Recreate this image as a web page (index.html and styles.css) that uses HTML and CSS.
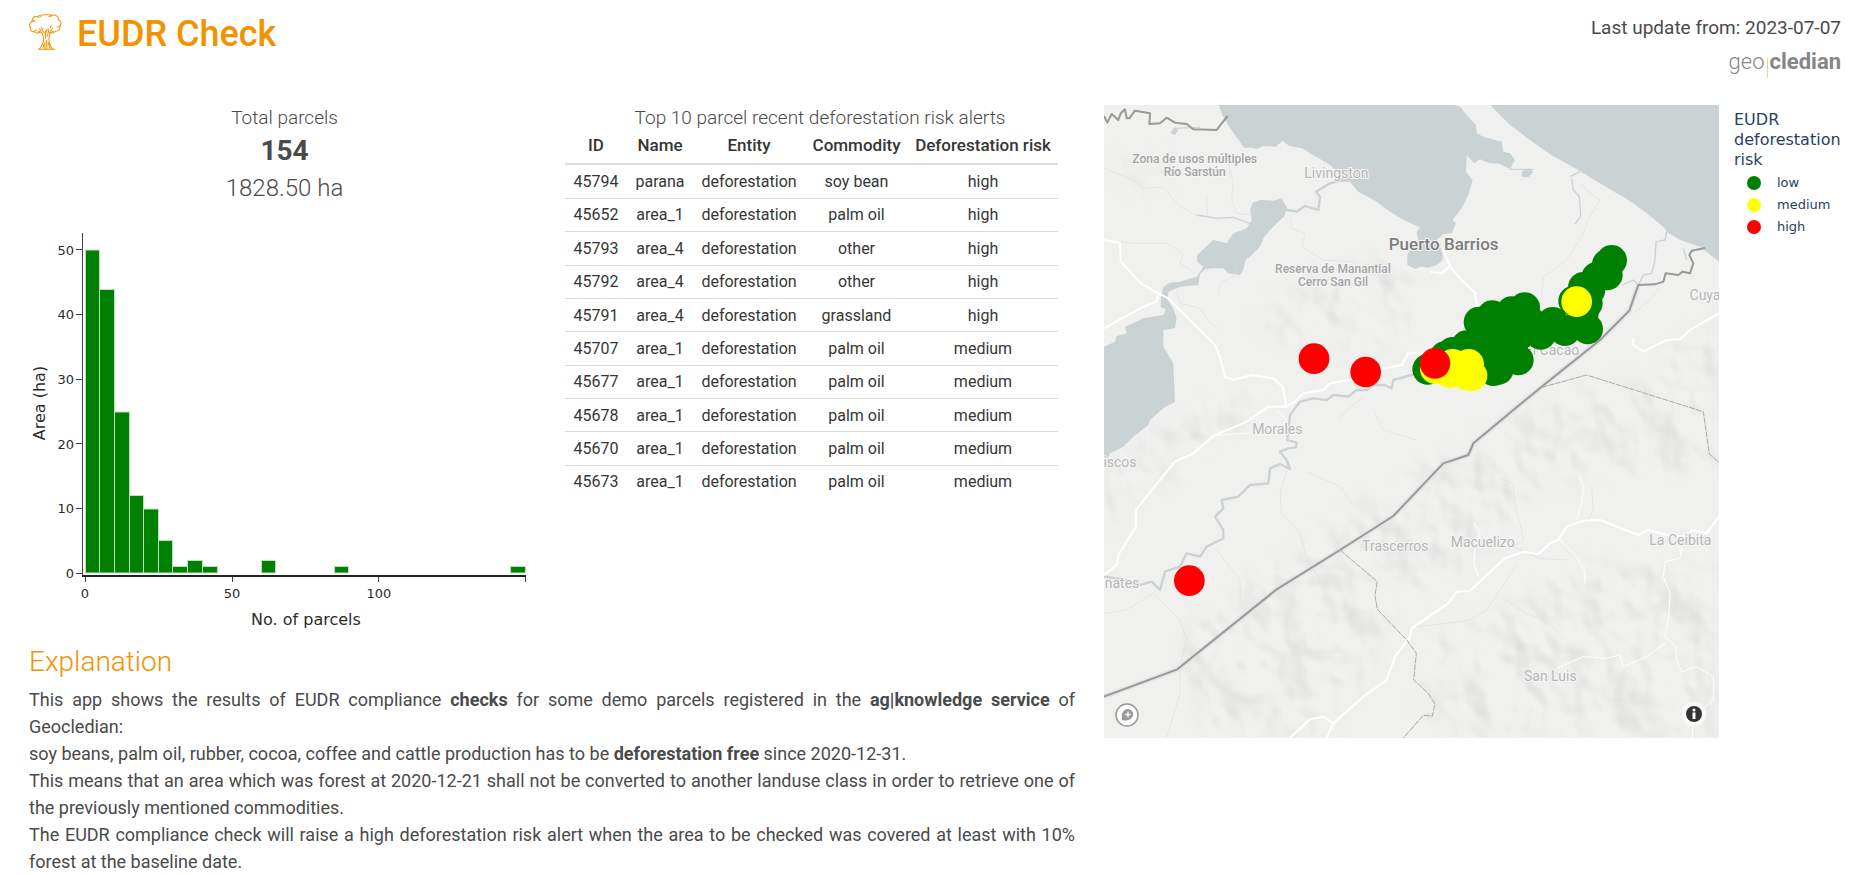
FILE: index.html
```html
<!DOCTYPE html>
<html lang="en">
<head>
<meta charset="utf-8">
<meta name="viewport" content="width=device-width, initial-scale=1">
<title>EUDR Check</title>
<link rel="stylesheet" href="styles.css">
</head>
<body>
<header class="header">
  <div class="brand">
    <svg class="brand-icon" viewBox="0 0 32 35" aria-hidden="true">
      <path d="M11 17.500C9 19 6 18.500 5 17C3 18 1 16 1.500 13C-.5 11 .5 8 3 7.500C2.500 4 5 2 8 2.500C11 .5 20 .2 23 1.200C26 .2 29 3 28.500 5.500C31 6.500 32 9.500 30 11.500C31 14 29 17 26 16.500C24 19 21 19 19.500 17.500M5 17C6 15.500 7 15.500 8 16M3 7.500C4 6.500 5 6.500 6 7M23 1.200C22 2 21 2.500 19 2.500M30 11.500C29.500 12.500 28 13 27 12.500M8 2.500C10 4 11 2.500 12 2.500"/>
      <path d="M9 16.500L12.500 18.500L14 22V27L11 33L9.500 34.300H24L22 33L19.500 28V22L20.500 18.500L24 16.500M15.500 34V27M17.500 34L17 25M13.500 33.500L14.500 29M20.500 33.500L18.500 28M16 24V16M17.500 22L19 17L18.500 14M15 19L13 16L13.500 14M11.500 12.500L12.500 14.500M21.500 11L20.500 14M16.500 18L17.500 14.500M10 14L12 17M23 14L20.500 17"/>
    </svg>
    <h1 class="brand-title">EUDR Check</h1>
  </div>
  <div class="meta">
    <p class="updated">Last update from: 2023-07-07</p>
    <p class="logo"><span class="logo-geo">geo</span><span class="logo-bar"></span><span class="logo-cledian">cledian</span></p>
  </div>
</header>

<main class="dashboard">
  <div class="left">
    <section class="summary">
      <p class="caption">Total parcels</p>
      <p class="count">154</p>
      <p class="area">1828.50 ha</p>
      <svg class="chart" viewBox="29 220 511 414" role="img" aria-label="Histogram of parcel area">
        <g class="bars">
          <rect x="85.500" y="250" width="14" height="323"/><rect x="99.500" y="289.500" width="15" height="283.500"/>
          <rect x="114.500" y="412" width="15" height="161"/><rect x="129.500" y="495.500" width="14" height="77.500"/>
          <rect x="143.500" y="509" width="15" height="64"/><rect x="158.500" y="540.500" width="14" height="32.500"/>
          <rect x="172.500" y="566.500" width="15" height="6.500"/><rect x="187.500" y="560.500" width="15" height="12.500"/>
          <rect x="202.500" y="566.500" width="15" height="6.500"/><rect x="261.500" y="560.500" width="14" height="12.500"/>
          <rect x="334.500" y="566.500" width="14" height="6.500"/><rect x="510.500" y="566.500" width="15" height="6.500"/>
        </g>
        <path class="axis" d="M82.500 233V576M76 249.500H82M76 314.500H82M76 379.500H82M76 443.500H82M76 508.500H82M76 573.500H82M85.500 576V582M232.500 576V582M378.500 576V582M525.500 576V582"/>
        <path class="axis-x" d="M82 576H526"/>
        <g class="tick tick-y">
          <text x="74" y="255">50</text><text x="74" y="319">40</text><text x="74" y="384">30</text>
          <text x="74" y="449">20</text><text x="74" y="513">10</text><text x="74" y="578">0</text>
        </g>
        <g class="tick tick-x">
          <text x="85" y="598">0</text><text x="232" y="598">50</text><text x="379" y="598">100</text>
        </g>
        <text class="axis-title" x="306" y="625">No. of parcels</text>
        <text class="axis-title" transform="translate(45 403) rotate(-90)">Area (ha)</text>
      </svg>
    </section>

    <section class="alerts">
      <p class="caption">Top 10 parcel recent deforestation risk alerts</p>
      <div class="table-wrap">
      <table class="table">
        <colgroup><col class="c-id"><col class="c-name"><col class="c-entity"><col class="c-commodity"><col class="c-risk"></colgroup>
        <thead><tr><th>ID</th><th>Name</th><th>Entity</th><th>Commodity</th><th>Deforestation risk</th></tr></thead>
        <tbody>
          <tr><td>45794</td><td>parana</td><td>deforestation</td><td>soy bean</td><td>high</td></tr>
          <tr><td>45652</td><td>area_1</td><td>deforestation</td><td>palm oil</td><td>high</td></tr>
          <tr><td>45793</td><td>area_4</td><td>deforestation</td><td>other</td><td>high</td></tr>
          <tr><td>45792</td><td>area_4</td><td>deforestation</td><td>other</td><td>high</td></tr>
          <tr><td>45791</td><td>area_4</td><td>deforestation</td><td>grassland</td><td>high</td></tr>
          <tr><td>45707</td><td>area_1</td><td>deforestation</td><td>palm oil</td><td>medium</td></tr>
          <tr><td>45677</td><td>area_1</td><td>deforestation</td><td>palm oil</td><td>medium</td></tr>
          <tr><td>45678</td><td>area_1</td><td>deforestation</td><td>palm oil</td><td>medium</td></tr>
          <tr><td>45670</td><td>area_1</td><td>deforestation</td><td>palm oil</td><td>medium</td></tr>
          <tr><td>45673</td><td>area_1</td><td>deforestation</td><td>palm oil</td><td>medium</td></tr>
        </tbody>
      </table>
      </div>
    </section>

    <section class="explanation">
      <h2 class="heading">Explanation</h2>
      <p class="copy">This app shows the results of EUDR compliance <b>checks</b> for some demo parcels registered in the <b>ag|knowledge service</b> of Geocledian:<br>soy beans, palm oil, rubber, cocoa, coffee and cattle production has to be <b>deforestation free</b> since 2020-12-31.<br>This means that an area which was forest at 2020-12-21 shall not be converted to another landuse class in order to retrieve one of the previously mentioned commodities.<br>The EUDR compliance check will raise a high deforestation risk alert when the area to be checked was covered at least with 10% forest at the baseline date.</p>
    </section>
  </div>

  <section class="map-panel">
    <div class="map">
      <svg class="map-canvas" viewBox="12 15 1845 1899" role="img" aria-label="Map of parcels by deforestation risk">
        <defs>
          <filter id="relief" x="0" y="0" width="100%" height="100%" color-interpolation-filters="sRGB">
            <feTurbulence type="fractalNoise" baseFrequency="0.007 0.006" numOctaves="3" seed="8"/>
            <feDiffuseLighting surfaceScale="30" lighting-color="#fff"><feDistantLight azimuth="315" elevation="50"/></feDiffuseLighting>
            <feColorMatrix values="0 0 0 0 .3  0 0 0 0 .3  0 0 0 0 .3  -.18 0 0 0 .15"/>
          </filter>
          <filter id="soft" x="-30%" y="-30%" width="160%" height="160%"><feGaussianBlur stdDeviation="35"/></filter>
          <mask id="hills" maskUnits="userSpaceOnUse" x="12" y="15" width="1845" height="1899">
            <g fill="#fff" filter="url(#soft)">
              <path d="M480 620L780 470L960 540L930 720L640 740L440 680Z"/>
              <path d="M12 1090L400 870L500 900L200 1130L12 1300Z"/>
              <path d="M240 1600L640 1300L1150 1000L1480 860L1857 800V1100L1600 1110L1300 1160L1180 1340L900 1500L700 1914H300Z"/>
              <path d="M980 1600L1300 1500L1400 1380L1857 1400V1914H960Z"/>
              <path d="M12 180L150 130L250 260L100 300Z" opacity=".5"/>
              <path d="M1680 760L1857 640V950Z"/>
            </g>
          </mask>
        </defs>
        <rect class="land" x="12" y="15" width="1845" height="1899"/>
        <g mask="url(#hills)"><rect x="12" y="15" width="1845" height="1899" filter="url(#relief)"/></g>
        <g class="water">
          <path d="M356 15L368 48 383 72 400 98 420 125 432 143 455 143 470 147 490 138 528 140 547 122 568 138 605 145 640 165 690 195 722 225 700 245 750 245 775 275 830 305 870 335 915 362 960 382 950 395 955 420 935 440 922 465 922 495 945 507 960 500 985 503 1010 495 1028 480 1028 460 1020 440 1010 420 1030 403 1055 400 1068 370 1058 360 1085 325 1105 285 1118 240 1098 215 1100 165 1122 190 1140 178 1165 188 1200 192 1230 207 1245 180 1230 160 1210 155 1205 125 1150 110 1130 100 1128 75 1100 45 1080 20 1065 15Z"/>
          <path d="M1170 15L1230 75 1290 120 1350 163 1440 213 1500 250 1600 310 1640 340 1695 385 1700 395 1740 420 1800 440 1857 485V15Z"/>
          <path d="M455 360L450 330 458 308 480 300 520 302 545 295 562 325 552 350 530 370 510 390 490 415 480 440 455 465 437 480 430 510 420 525 385 520 370 505 340 505 315 508 300 522 295 555 240 560 205 575 203 600 218 622 230 655 225 685 190 690 190 740 205 765 220 790 225 905 190 925 150 960 145 975 100 1010 70 1040 30 1060 22 1078 12 1075V740L45 725 50 708 80 700 75 680 100 670 130 655 190 645 198 628 182 622 183 590 190 560 210 548 240 545 290 530 310 500 292 485 292 465 340 420 380 430 400 400 440 385Z"/>
          <path d="M1265 215L1285 205 1300 215 1285 232 1265 230ZM210 98L225 82 235 90 225 105Z"/>
        </g>
        <g class="river">
          <path d="M560 330L590 335 615 318 655 330 660 290 648 275 690 250 730 240M960 815L935 825 880 840 875 865 855 855 820 855 800 870 770 870 745 890 700 885 680 900 640 895 600 905 570 945 562 1020 590 1028 588 1042 565 1045 540 1055 560 1080 570 1107 540 1092 510 1105 505 1150 450 1155 415 1190 365 1200 370 1225 345 1250 370 1290 370 1315 320 1340 300 1370 260 1360 240 1400 195 1415 180 1470 155 1445 120 1455 80 1440 12 1430"/>
        </g>
        <path class="stream" d="M1228 208L1300 208M1410 230L1440 215M1415 235L1420 270 1438 290 1442 350 1425 372M1567 555L1600 540 1615 555 1630 525 1655 520 1665 480 1668 425 1695 420 1700 395M1750 445L1760 480M290 345L350 355 400 352 450 370M220 85L300 82"/>
        <path class="brook" d="M12 205L100 240 130 265 190 262 240 320 300 350M320 290L322 350M385 190L400 250 395 300 410 340 450 345M570 345L575 385 615 400 605 440 670 480 760 485M12 420L90 430 200 430 250 460 240 490 285 520M230 575L240 610 300 625 330 670 360 688M355 580L360 550 400 530 410 490M1440 250L1460 270 1500 300 1470 350 1445 410 1400 480 1360 510 1330 530 1325 585M1200 1135L1240 1150 1245 1220 1260 1270 1270 1320 1240 1340 1320 1375 1400 1380M560 1110L540 1180 545 1240 600 1300 620 1370 660 1440M620 1115L720 1160 760 1215M345 1345L420 1440 420 1520M160 1480L240 1560 260 1620 240 1700 240 1780 200 1914M12 1540L80 1530 160 1480M950 1580L1040 1570 1110 1560 1160 1530 1220 1440 1250 1390M1220 1500L1280 1540 1350 1570 1390 1620M1600 640L1650 600 1680 560M720 960L730 940 790 890M1475 1160L1480 1230 1460 1270M820 930L850 990 950 1020"/>
        <g class="road">
          <path d="M12 420L60 428 62 485 120 548 175 580 205 595 345 735 360 770 375 830 400 840 455 825 520 835 548 860 558 910 555 922M12 685L130 620 170 605 175 580M12 1425L50 1395 55 1365 108 1280 108 1230 155 1170 225 1085 280 1060 340 1008 440 965 505 920 560 920 585 905 610 880 670 870 690 850 750 840 840 808 905 795 925 760 980 758"/>
          <path d="M1028 445L1050 498 1075 530 1125 578 1132 630M1050 498L1025 520 990 515M1600 715L1600 735 1630 755 1700 720 1740 718 1770 690 1857 640"/>
          <path d="M1857 1250L1820 1300 1780 1290 1750 1310 1700 1305 1645 1290 1615 1305 1500 1260 1450 1262 1400 1280 1375 1320 1350 1330 1315 1363 1270 1355 1215 1375 1110 1472 1070 1475 1045 1510 1000 1540 935 1585 930 1610 885 1670 860 1740 790 1790 700 1870 680 1914M570 1914L630 1858 670 1850 700 1870"/>
        </g>
        <path class="lane" d="M1120 1268L1140 1295 1125 1340 1122 1390 1135 1430M1440 1130L1450 1160 1445 1210 1430 1260M1380 1320L1430 1370 1455 1415 1455 1450M1745 1340L1740 1375 1695 1385 1690 1430 1710 1480 1705 1560 1695 1610 1728 1640 1730 1680 1745 1715 1790 1700 1840 1730 1840 1800 1780 1850 1777 1914M1370 1705L1450 1670 1520 1675 1560 1665 1570 1700 1640 1670 1695 1630M340 1008L450 998M530 930L560 960"/>
        <path class="shade" d="M12 1790L232 1708 530 1468 720 1350 880 1248 1030 1090 1105 1065 1120 1030 1240 930 1325 860 1500 720 1588 632 1615 555"/>
        <path class="border" d="M12 48L22 68 35 42 55 60 62 40 75 28 80 55 88 55 105 32 150 40 148 72 180 70 200 53 225 68 260 72 280 88 350 90 365 70 383 48M12 1790L232 1708 530 1468 720 1350 880 1248 1030 1090 1105 1065 1120 1030 1240 930 1325 860 1500 720 1588 632 1615 555 1665 553 1690 545 1697 520 1735 525 1748 515 1770 520 1780 490 1768 465 1775 452 1815 444"/>
        <path class="province" d="M1325 862L1460 825 1810 935 1828 1062 1857 1087M720 1350L832 1445 825 1485 832 1528 920 1620 949 1660 941 1740 985 1780 1005 1812 997 1848 970 1846 910 1914"/>
        <g class="area-label">
          <text x="284" y="188">Zona de usos múltiples</text><text x="284" y="228">Río Sarstún</text>
          <text x="699" y="518">Reserva de Manantial</text><text x="699" y="558">Cerro San Gil</text>
        </g>
        <g class="place">
          <text x="709" y="234">Livingston</text><text x="532" y="1001">Morales</text><text x="886" y="1353">Trascerros</text>
          <text x="1148" y="1340">Macuelizo</text><text x="1741" y="1336">La Ceibita</text><text x="1351" y="1743">San Luis</text>
          <text x="1356" y="766">El Cacao</text><text x="1815" y="599">Cuya</text>
          <text x="60" y="1102">iscos</text><text x="66" y="1465">nates</text>
        </g>
        <text class="city" x="1031" y="451">Puerto Barrios</text>
        <g class="low">
          <circle cx="983" cy="808" r="46"/><circle cx="1137" cy="666" r="46"/><circle cx="1177" cy="647" r="46"/><circle cx="1235" cy="635" r="46"/><circle cx="1274" cy="623" r="46"/><circle cx="1290" cy="665" r="46"/><circle cx="1358" cy="667" r="46"/><circle cx="1322" cy="703" r="46"/><circle cx="1395" cy="692" r="46"/><circle cx="1440" cy="670" r="46"/><circle cx="1463" cy="687" r="46"/><circle cx="1462" cy="610" r="46"/><circle cx="1450" cy="562" r="46"/><circle cx="1421" cy="603" r="46"/><circle cx="1470" cy="570" r="46"/><circle cx="1490" cy="532" r="46"/><circle cx="1522" cy="525" r="46"/><circle cx="1535" cy="481" r="46"/><circle cx="1522" cy="493" r="46"/><circle cx="1255" cy="780" r="46"/><circle cx="1180" cy="812" r="46"/><circle cx="1195" cy="808" r="46"/><circle cx="1100" cy="737" r="46"/><circle cx="1058" cy="757" r="46"/><circle cx="1035" cy="770" r="46"/><circle cx="1210" cy="700" r="46"/><circle cx="1240" cy="730" r="46"/><circle cx="1160" cy="740" r="46"/><circle cx="1130" cy="780" r="46"/><circle cx="1220" cy="760" r="46"/><circle cx="1265" cy="700" r="46"/><circle cx="1450" cy="640" r="46"/>
        </g>
        <g class="medium">
          <circle cx="1430" cy="605" r="46"/><circle cx="1006" cy="806" r="46"/><circle cx="1058" cy="793" r="46"/><circle cx="1106" cy="793" r="46"/><circle cx="1050" cy="818" r="46"/><circle cx="1100" cy="825" r="46"/><circle cx="1116" cy="827" r="46"/>
        </g>
        <g class="high">
          <circle cx="1005" cy="790" r="46"/><circle cx="642" cy="776" r="46"/><circle cx="797" cy="816" r="46"/><circle cx="268" cy="1442" r="46"/>
        </g>
      </svg>
      <a class="map-logo" href="#" aria-label="Mapbox">
        <svg viewBox="0 0 24 24"><circle cx="12" cy="12" r="11" fill="#fff" stroke="#999" stroke-width="1.500"/><path fill="#999" d="M7 17.300C6.500 13 6.800 10 8.500 8.200A5.300 5.300 0 1 1 15.700 15.700C14 17.400 11 17.700 7 17.300Z"/><path fill="#fff" d="M13 8L14 10.400L16.400 11.500L14 12.500L13 15L12 12.500L9.600 11.500L12 10.400Z"/></svg>
      </a>
      <button class="map-info" type="button" aria-label="Attribution">
        <svg viewBox="0 0 24 24"><circle cx="12" cy="12" r="8" fill="#333"/><circle cx="12" cy="8" r="1.500" fill="#fff"/><path fill="#fff" d="M10.500 10.500H13.500V17H10.500Z"/></svg>
      </button>
    </div>
    <div class="legend">
      <p class="legend-title">EUDR deforestation risk</p>
      <ul class="legend-list">
        <li><span class="dot dot-low"></span>low</li>
        <li><span class="dot dot-medium"></span>medium</li>
        <li><span class="dot dot-high"></span>high</li>
      </ul>
    </div>
  </section>
</main>
</body>
</html>
```

FILE: styles.css
```css
* { box-sizing: border-box; }
body { margin: 0; padding: 12px 28px 12px 29px; background: #fff; color: #4a4a4a; font-family: Roboto, "Liberation Sans", sans-serif; font-size: 18px; }
p, h1, h2, ul { margin: 0; padding: 0; }

.header { display: flex; justify-content: space-between; min-height: 93px; }
.brand { display: flex; align-items: flex-start; gap: 15px; }
.brand-icon { width: 33px; height: 36px; margin-top: 2px; fill: none; stroke: #f39200; stroke-width: 1; }
.brand-title { color: #f39200; font-size: 36px; font-weight: 500; line-height: 44px; }
.meta { text-align: right; padding-right: 3px; }
.updated { font-size: 19px; line-height: 32px; }
.logo { display: flex; justify-content: flex-end; color: #868686; font-size: 22px; line-height: 36px; }
.logo-geo { font-weight: 300; }
.logo-bar { width: 1px; height: 20px; margin: 14px 2px 0; background: #fbcf8f; }
.logo-cledian { font-weight: 700; }

.dashboard { display: grid; grid-template-columns: 1046fr 740fr; gap: 29px; align-items: start; }
.left { display: grid; grid-template-columns: 511fr 527fr; column-gap: 8px; }
.caption { font-size: 19px; font-weight: 300; line-height: 25px; text-align: center; }
.summary { text-align: center; }
.count { font-size: 28px; font-weight: 700; line-height: 42px; }
.area { font-size: 24px; font-weight: 300; line-height: 32px; }
.chart { display: block; width: 100%; margin-top: 16px; }
.bars { fill: #008000; stroke: #bfe0bf; stroke-width: 1; }
.axis { fill: none; stroke: #444; stroke-width: 1; }
.axis-x { stroke: #222; stroke-width: 2; }
.tick, .axis-title { font-family: Verdana, "DejaVu Sans", sans-serif; fill: #2b2b2b; }
.tick { font-size: 13px; }
.tick-y { text-anchor: end; }
.tick-x, .axis-title { text-anchor: middle; }
.axis-title { font-size: 16px; }

.alerts { padding-left: 17px; }
.table-wrap { padding-right: 17px; }
.table { width: 100%; height: 368px; border-collapse: collapse; table-layout: fixed; color: #363636; font-size: 16px; text-align: center; }
.c-id { width: 62px; }
.c-name { width: 66px; }
.c-entity { width: 112px; }
.c-commodity { width: 103px; }
.table th { padding: 0 0 4px; height: 34px; font-size: 17px; font-weight: 500; line-height: 20px; vertical-align: middle; white-space: nowrap; border-bottom: 2px solid #dbdbdb; }
.table td { padding: 0; border-bottom: 1px solid #dbdbdb; }
.table tbody tr:last-child td { border-bottom: 0; }

.explanation { grid-column: 1 / -1; }
.heading { color: #f39200; font-size: 28px; font-weight: 300; line-height: 36px; margin-top: 10px; }
.copy { margin-top: 6px; line-height: 27px; text-align: justify; }

.map-panel { display: flex; align-items: flex-start; gap: 15px; }
.map { position: relative; flex: 1; }
.map-canvas { display: block; width: 100%; }
.land { fill: #f0f0ef; }
.water { fill: #cad2d3; }
.river, .stream, .brook, .road, .lane, .shade, .border, .province { fill: none; stroke-linejoin: round; }
.river { stroke: #cad2d3; stroke-width: 7; }
.stream { stroke: #cad2d3; stroke-width: 4; }
.brook { stroke: #dcdfdf; stroke-width: 2; }
.road { stroke: #fff; stroke-width: 6; }
.lane { stroke: #fff; stroke-width: 3; }
.shade { stroke: #e4e4e4; stroke-width: 15; }
.border { stroke: #999; stroke-width: 6; }
.province { stroke: #aaa; stroke-width: 3; stroke-dasharray: 18 3; }
.area-label, .place, .city { text-anchor: middle; paint-order: stroke; stroke: #f5f5f5; stroke-width: 6; }
.area-label { fill: #a3a3a3; font-size: 36px; font-weight: 500; }
.place { fill: #b5b5b5; font-size: 42px; }
.city { fill: #7d7d7d; font-size: 51px; font-weight: 500; }
.low { fill: #008000; }
.medium { fill: #ff0; }
.high { fill: #f00; }
.map-logo, .map-info { position: absolute; width: 24px; height: 24px; }
.map-logo { left: 11px; bottom: 11px; }
.map-info { right: 13px; bottom: 12px; padding: 0; border: 0; border-radius: 50%; background: rgba(255, 255, 255, .6); }
.map-logo svg, .map-info svg { display: block; width: 24px; height: 24px; }

.legend { width: 110px; padding-top: 5px; color: #2a3f5f; font-family: Verdana, "DejaVu Sans", sans-serif; font-size: 13px; }
.legend-title { font-size: 16px; line-height: 20px; }
.legend-list { list-style: none; padding: 2px 0 0 13px; }
.legend-list li { display: flex; align-items: center; gap: 16px; line-height: 22px; }
.dot { flex: none; width: 14px; height: 14px; border-radius: 50%; }
.dot-low { background: #008000; }
.dot-medium { background: #ff0; }
.dot-high { background: #f00; }
```
